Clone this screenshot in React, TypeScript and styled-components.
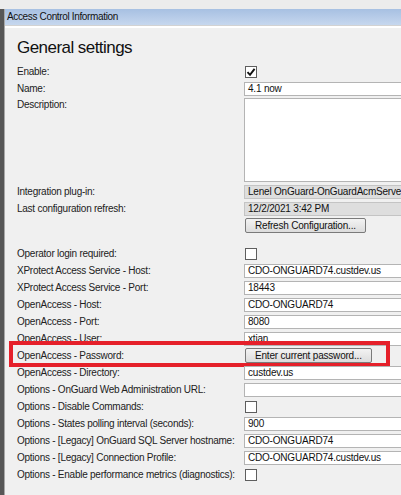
import React from 'react';
import styled, { createGlobalStyle } from 'styled-components';

const GlobalStyle = createGlobalStyle`
  html, body {
    margin: 0;
    padding: 0;
    background: #ececec;
    overflow: hidden;
  }
  body {
    font-family: 'Liberation Sans', Arial, sans-serif;
  }
`;

type Field =
  | { kind: 'check'; label: string; checked?: boolean }
  | { kind: 'text'; label: string; value: string }
  | { kind: 'readonly'; label: string; value: string }
  | { kind: 'button'; label: string; value: string; marked?: boolean };

const upper: Field[] = [
  { kind: 'check', label: 'Enable:', checked: true },
  { kind: 'text', label: 'Name:', value: '4.1 now' },
];

const pluginRows: Field[] = [
  { kind: 'readonly', label: 'Integration plug-in:', value: 'Lenel OnGuard-OnGuardAcmServer' },
  { kind: 'readonly', label: 'Last configuration refresh:', value: '12/2/2021 3:42 PM' },
  { kind: 'button', label: '', value: 'Refresh Configuration...' },
];

const lower: Field[] = [
  { kind: 'check', label: 'Operator login required:' },
  { kind: 'text', label: 'XProtect Access Service - Host:', value: 'CDO-ONGUARD74.custdev.us' },
  { kind: 'text', label: 'XProtect Access Service - Port:', value: '18443' },
  { kind: 'text', label: 'OpenAccess - Host:', value: 'CDO-ONGUARD74' },
  { kind: 'text', label: 'OpenAccess - Port:', value: '8080' },
  { kind: 'text', label: 'OpenAccess - User:', value: 'xtian' },
  { kind: 'button', label: 'OpenAccess - Password:', value: 'Enter current password...', marked: true },
  { kind: 'text', label: 'OpenAccess - Directory:', value: 'custdev.us' },
  { kind: 'text', label: 'Options - OnGuard Web Administration URL:', value: '' },
  { kind: 'check', label: 'Options - Disable Commands:' },
  { kind: 'text', label: 'Options - States polling interval (seconds):', value: '900' },
  { kind: 'text', label: 'Options - [Legacy] OnGuard SQL Server hostname:', value: 'CDO-ONGUARD74' },
  { kind: 'text', label: 'Options - [Legacy] Connection Profile:', value: 'CDO-ONGUARD74.custdev.us' },
  { kind: 'check', label: 'Options - Enable performance metrics (diagnostics):' },
];

const CheckMark = () => (
  <svg width="10" height="10" viewBox="0 0 10 10">
    <path d="M1.5 5.2 L4 7.8 L8.6 1.8" fill="none" stroke="#111" strokeWidth="1.9" />
  </svg>
);

const FieldRow = ({ field }: { field: Field }) => (
  <Row>
    <Label>{field.label}</Label>
    {field.kind === 'check' && <CheckBox>{field.checked && <CheckMark />}</CheckBox>}
    {field.kind === 'text' && <TextBox>{field.value}</TextBox>}
    {field.kind === 'readonly' && <TextBox $readonly>{field.value}</TextBox>}
    {field.kind === 'button' && <Button>{field.value}</Button>}
    {field.kind === 'button' && field.marked && <Highlight />}
  </Row>
);

const App = () => (
  <>
    <GlobalStyle />
    <Screen>
      <TopStrip />
      <Frame>
        <LeftEdge />
        <Main>
          <TitleBar>Access Control Information</TitleBar>
          <Panel>
            <Heading>General settings</Heading>
            {upper.map((f) => (
              <FieldRow key={f.label} field={f} />
            ))}
            <TallRow>
              <Label $top>Description:</Label>
              <TextArea />
            </TallRow>
            {pluginRows.map((f) => (
              <FieldRow key={f.value} field={f} />
            ))}
            <Spacer />
            {lower.map((f) => (
              <FieldRow key={f.label} field={f} />
            ))}
          </Panel>
        </Main>
      </Frame>
    </Screen>
  </>
);

const Screen = styled.div`
  width: 401px;
  height: 495px;
  display: flex;
  flex-direction: column;
  overflow: hidden;
`;

const TopStrip = styled.div`
  height: 9px;
  flex: none;
  background: #ececec;
`;

const Frame = styled.div`
  flex: 1;
  display: flex;
  min-height: 0;
`;

const LeftEdge = styled.div`
  width: 4px;
  flex: none;
  background: #575757;
  border-right: 1px solid #a8a8a8;
`;

const Main = styled.div`
  flex: 1;
  display: flex;
  flex-direction: column;
  min-width: 0;
  overflow: hidden;
  background: #f0f0f0;
`;

const TitleBar = styled.div`
  height: 16px;
  flex: none;
  padding-left: 2px;
  line-height: 16px;
  font-size: 10px;
  letter-spacing: -0.35px;
  color: #111;
  background: linear-gradient(#a7c0e2, #c6d7ee);
  border-bottom: 1px solid #d2d2d2;
  white-space: nowrap;
`;

const Panel = styled.div`
  flex: 1;
  display: flex;
  flex-direction: column;
  padding: 0 0 0 12px;
  border-top: 2px solid #ffffff;
  background: #f0f0f0;
`;

const Heading = styled.h1`
  margin: 9px 0 4px;
  font-size: 17px;
  font-weight: 400;
  letter-spacing: -0.55px;
  line-height: 22px;
  color: #111;
`;

const Row = styled.div`
  position: relative;
  display: grid;
  grid-template-columns: 227px 1fr;
  align-items: center;
  height: 17px;
`;

const TallRow = styled.div`
  display: grid;
  grid-template-columns: 227px 1fr;
  align-items: start;
  height: 86px;
`;

const Spacer = styled.div`
  height: 11px;
`;

const Label = styled.span<{ $top?: boolean }>`
  font-size: 10px;
  letter-spacing: -0.25px;
  color: #222;
  white-space: nowrap;
  padding-top: ${(p) => (p.$top ? '2px' : '0')};
`;

const TextBox = styled.div<{ $readonly?: boolean }>`
  box-sizing: border-box;
  width: 200px;
  height: 14px;
  padding: 0 3px;
  font-size: 10px;
  letter-spacing: -0.2px;
  line-height: 12px;
  color: #111;
  white-space: nowrap;
  overflow: hidden;
  background: ${(p) => (p.$readonly ? '#dedede' : '#ffffff')};
  border: 1px solid ${(p) => (p.$readonly ? '#c4c4c4' : '#b4b4b4')};
`;

const TextArea = styled.div`
  box-sizing: border-box;
  width: 200px;
  height: 84px;
  margin-top: 1px;
  background: #ffffff;
  border: 1px solid #b4b4b4;
`;

const CheckBox = styled.div`
  box-sizing: border-box;
  width: 12px;
  height: 12px;
  margin-left: 1px;
  display: flex;
  align-items: center;
  justify-content: center;
  background: #ffffff;
  border: 1px solid #5e5e5e;
`;

const Button = styled.div`
  box-sizing: border-box;
  justify-self: start;
  height: 15px;
  padding: 0 9px;
  margin-left: 1px;
  font-size: 10px;
  letter-spacing: -0.2px;
  line-height: 13px;
  color: #111;
  white-space: nowrap;
  background: linear-gradient(#f3f3f3, #dcdcdc);
  border: 1px solid #7a7a7a;
  border-radius: 2px;
`;

const Highlight = styled.div`
  position: absolute;
  left: -8px;
  top: -6px;
  width: 381px;
  height: 26px;
  box-sizing: border-box;
  border: 4px solid #e5202a;
  pointer-events: none;
`;

export default App;
